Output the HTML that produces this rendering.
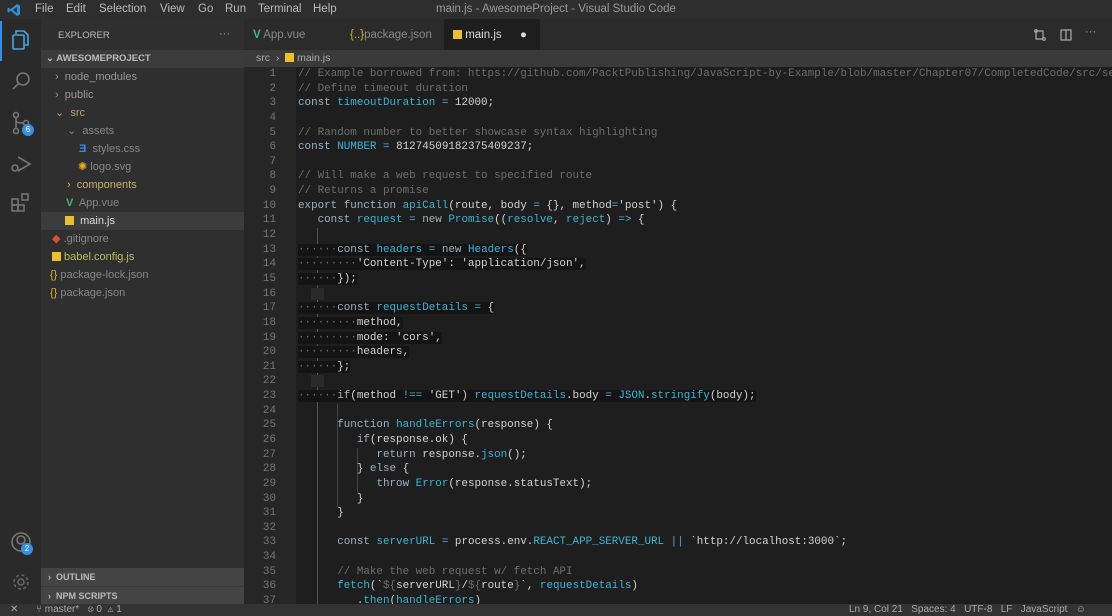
<!DOCTYPE html>
<html><head><meta charset="utf-8"><style>
*{margin:0;padding:0;box-sizing:border-box}
body{width:1112px;height:616px;overflow:hidden;background:#1e1e1e;font-family:"Liberation Sans",sans-serif;color:#ccc;position:relative}
.abs{position:absolute}
#title{left:0;top:0;width:1112px;height:19px;background:#2e2e2e;font-size:11.5px;color:#bbb}
#title span{position:absolute;top:3px}
#act{left:0;top:19px;width:41px;height:585px;background:#2a2a2a}
#side{left:41px;top:19px;width:203px;height:585px;background:#2f2f2f;font-size:11px}
.row{position:absolute;left:0;width:203px;height:18px;line-height:18px;white-space:nowrap}
#tabs{left:244px;top:19px;width:868px;height:31px;background:#2b2b2b}
.tab{position:absolute;top:0;height:31px;line-height:33px;font-size:11.5px;color:#8a8a8a}
#crumb{left:244px;top:50px;width:868px;height:17px;background:#3a3a3a;font-size:10.5px;color:#aaa}
#gut{left:244px;top:67px;width:52px;height:537px;background:#262626}
#code{left:296px;top:67px;width:816px;height:537px;background:#1e1e1e;overflow:hidden}
.ln{position:absolute;right:20px;font-family:"Liberation Mono",monospace;font-size:10.9px;color:#777;width:40px;text-align:right}
.l{position:absolute;left:2px;height:14.64px;white-space:pre;font-family:"Liberation Mono",monospace;font-size:10.9px;line-height:14.64px;color:#d4d4d4}
.c{color:#6e6e6e}.k{color:#9fb2c6}.v{color:#3fb4d6}.n{color:#d4d4d4}.s{color:#d8d8d8}.o{color:#5aa9d6}
.hl{background:#141414}
#status{left:0;top:604px;width:1112px;height:12px;background:#333;font-size:10px;color:#aaa}
.badge{position:absolute;width:12px;height:12px;border-radius:6px;background:#3a8ee6;color:#fff;font-size:8px;text-align:center;line-height:12px}
</style></head><body>
<div id="title" class="abs">
<svg class="abs" style="left:7px;top:3px" width="14" height="14" viewBox="0 0 14 14"><path d="M10 1 L13 2.5 V11.5 L10 13 L3.5 7.8 L1.3 9.5 L0.5 9 V5 L1.3 4.5 L3.5 6.2Z M10 4 L6 7 L10 10Z" fill="#2f8fd8" fill-rule="evenodd"/></svg>
<span style="left:35px">File</span><span style="left:66px">Edit</span><span style="left:99px">Selection</span><span style="left:160px">View</span><span style="left:198px">Go</span><span style="left:225px">Run</span><span style="left:258px">Terminal</span><span style="left:313px">Help</span>
<span style="left:436px;color:#9a9a9a">main.js - AwesomeProject - Visual Studio Code</span>
</div>
<div id="act" class="abs">
<div class="abs" style="left:0;top:2px;width:2px;height:40px;background:#3a8ee6"></div>
<svg class="abs" style="left:11px;top:10px" width="20" height="22" viewBox="0 0 20 22" fill="none" stroke="#4aa3e0" stroke-width="1.6"><path d="M5 5 V2 H13 L17 6 V16 H13"/><rect x="2" y="6" width="11" height="14" rx="1"/></svg>
<svg class="abs" style="left:11px;top:52px" width="20" height="20" viewBox="0 0 20 20" fill="none" stroke="#777" stroke-width="1.6"><circle cx="12" cy="8" r="6"/><path d="M8 12 L2 18"/></svg>
<svg class="abs" style="left:11px;top:92px" width="20" height="24" viewBox="0 0 20 24" fill="none" stroke="#777" stroke-width="1.6"><circle cx="5" cy="4" r="2.5"/><circle cx="5" cy="20" r="2.5"/><circle cx="15" cy="12" r="2.5"/><path d="M5 6.5 V17.5 M5 10 Q5 12 12.5 12"/></svg>
<div class="badge" style="left:22px;top:105px">6</div>
<svg class="abs" style="left:10px;top:135px" width="22" height="20" viewBox="0 0 22 20" fill="none" stroke="#777" stroke-width="1.6"><path d="M8 3 L20 10 L8 17"/><circle cx="5" cy="14" r="3"/></svg>
<svg class="abs" style="left:10px;top:173px" width="22" height="22" viewBox="0 0 22 22" fill="none" stroke="#777" stroke-width="1.5"><rect x="2" y="7" width="6" height="6"/><rect x="2" y="13" width="6" height="6"/><rect x="8" y="13" width="6" height="6"/><rect x="12" y="2" width="6" height="6"/></svg>
<svg class="abs" style="left:10px;top:512px" width="22" height="22" viewBox="0 0 22 22" fill="none" stroke="#777" stroke-width="1.6"><circle cx="11" cy="11" r="9"/><circle cx="11" cy="9" r="4"/></svg>
<div class="badge" style="left:21px;top:524px">2</div>
<svg class="abs" style="left:11px;top:553px" width="20" height="20" viewBox="0 0 20 20" fill="none" stroke="#666" stroke-width="1.6"><circle cx="10" cy="10" r="3"/><circle cx="10" cy="10" r="7" stroke-dasharray="3 2.5"/></svg>
</div>
<div id="side" class="abs">
<div class="row" style="top:8px;left:17px;font-size:9.5px;color:#bbb">EXPLORER</div>
<div class="row" style="top:6px;left:178px;width:20px;color:#999">···</div>
<div class="row" style="top:31px;background:#3b3b3b;font-size:9.5px;font-weight:bold;color:#bbb;padding-left:5px">⌄ AWESOMEPROJECT</div>
<div class="row" style="top:49px;padding-left:14px;color:#999">›&nbsp; node_modules</div>
<div class="row" style="top:67px;padding-left:14px;color:#999">›&nbsp; public</div>
<div class="row" style="top:85px;padding-left:14px;color:#c8a060">⌄&nbsp; <span style="color:#b8a070">src</span></div>
<div class="row" style="top:103px;padding-left:26px;color:#888">⌄&nbsp; assets</div>
<div class="row" style="top:121px;padding-left:38px;color:#888"><span style="color:#3a8ee6;font-weight:bold">Ǝ</span>&nbsp; styles.css</div>
<div class="row" style="top:139px;padding-left:37px;color:#888"><span style="color:#e8b020">✺</span>&nbsp;logo.svg</div>
<div class="row" style="top:157px;padding-left:26px;color:#c8b070">›&nbsp; components</div>
<div class="row" style="top:175px;padding-left:25px;color:#888"><span style="color:#40b883;font-weight:bold">V</span>&nbsp; App.vue</div>
<div class="row" style="top:193px;background:#3c3c3c;padding-left:24px;color:#ddd"><span style="display:inline-block;width:9px;height:9px;background:#e8c030;vertical-align:-1px"></span>&nbsp; main.js</div>
<div class="row" style="top:211px;padding-left:11px;color:#888"><span style="color:#e05030">◆</span>&nbsp;.gitignore</div>
<div class="row" style="top:229px;padding-left:11px;color:#b8c060"><span style="display:inline-block;width:9px;height:9px;background:#e8c030;vertical-align:-1px"></span>&nbsp;babel.config.js</div>
<div class="row" style="top:247px;padding-left:9px;color:#888"><span style="color:#d8b030">{}</span> package-lock.json</div>
<div class="row" style="top:265px;padding-left:9px;color:#888"><span style="color:#d8b030">{}</span> package.json</div>
<div class="row" style="top:549px;background:#444;font-size:9px;font-weight:bold;color:#bbb;padding-left:7px">›&nbsp; OUTLINE</div>
<div class="row" style="top:567px;background:#444;font-size:9px;font-weight:bold;color:#bbb;padding-left:7px;border-top:1px solid #3a3a3a">›&nbsp; NPM SCRIPTS</div>
</div>
<div id="tabs" class="abs">
<div class="tab" style="left:0;width:100px;padding-left:9px"><span style="color:#40b883;font-weight:bold">V</span> App.vue</div>
<div class="tab" style="left:100px;width:100px;padding-left:6px"><span style="color:#d8b030">{..}</span>package.json</div>
<div class="tab" style="left:200px;width:96px;background:#1e1e1e;color:#ddd;padding-left:9px"><span style="display:inline-block;width:9px;height:9px;background:#e8c030;vertical-align:-1px"></span> main.js <span style="position:absolute;left:76px;color:#ddd">●</span></div>
<svg class="abs" style="left:790px;top:10px" width="12" height="12" viewBox="0 0 12 12" fill="none" stroke="#aaa" stroke-width="1.2"><path d="M2 2 H9 V9 M2 2 V10 H9"/><circle cx="2" cy="2" r="1.3"/><circle cx="10" cy="10" r="1.3"/></svg>
<svg class="abs" style="left:816px;top:10px" width="12" height="12" viewBox="0 0 12 12" fill="none" stroke="#aaa" stroke-width="1.2"><rect x="1" y="1" width="10" height="10"/><path d="M6 1 V11"/></svg>
<div class="abs" style="left:841px;top:7px;color:#aaa;font-size:11px">···</div>
</div>
<div id="crumb" class="abs"><span style="position:absolute;left:12px;top:2px">src &nbsp;›&nbsp; <span style="display:inline-block;width:9px;height:9px;background:#e8c030;vertical-align:-1px"></span> main.js</span></div>
<div id="gut" class="abs"></div>
<div id="code" class="abs">
<div class="abs" style="left:21px;top:161px;width:1px;height:376px;background:#555"></div>
<div class="abs" style="left:41px;top:337px;width:1px;height:103px;background:#444"></div>
<div class="abs" style="left:61px;top:381px;width:1px;height:44px;background:#444"></div>
</div>
<div id="status" class="abs">
<span class="abs" style="left:10px;top:0">✕</span>
<span class="abs" style="left:36px;top:0">⑂ master*&nbsp;&nbsp; ⊗ 0 &nbsp;⚠ 1</span>
<span class="abs" style="left:849px;top:0">Ln 9, Col 21 &nbsp; Spaces: 4 &nbsp; UTF-8 &nbsp; LF &nbsp; JavaScript &nbsp; ☺</span>
</div>
<script>
const L=[
'<span class="c">// Example borrowed from: https://github.com/PacktPublishing/JavaScript-by-Example/blob/master/Chapter07/CompletedCode/src/se</span>',
'<span class="c">// Define timeout duration</span>',
'<span class="k">const</span> <span class="v">timeoutDuration</span> <span class="o">=</span> 12000;',
'',
'<span class="c">// Random number to better showcase syntax highlighting</span>',
'<span class="k">const</span> <span class="v">NUMBER</span> <span class="o">=</span> 81274509182375409237;',
'',
'<span class="c">// Will make a web request to specified route</span>',
'<span class="c">// Returns a promise</span>',
'<span class="k">export function</span> <span class="v">apiCall</span>(route, body <span class="o">=</span> {}, method<span class="o">=</span>\'post\') {',
'   <span class="k">const</span> <span class="v">request</span> <span class="o">=</span> <span class="k">new</span> <span class="v">Promise</span>((<span class="v">resolve</span>, <span class="v">reject</span>) <span class="o">=&gt;</span> {',
'',
'<span class="hl"><span class="c">······</span><span class="k">const</span> <span class="v">headers</span> <span class="o">=</span> <span class="k">new</span> <span class="v">Headers</span>({</span>',
'<span class="hl"><span class="c">·········</span>\'Content-Type\': \'application/json\',</span>',
'<span class="hl"><span class="c">······</span>});</span>',
'  <span style="background:#2a2a2a">  </span>',
'<span class="hl"><span class="c">······</span><span class="k">const</span> <span class="v">requestDetails</span> <span class="o">=</span> {</span>',
'<span class="hl"><span class="c">·········</span>method,</span>',
'<span class="hl"><span class="c">·········</span>mode: \'cors\',</span>',
'<span class="hl"><span class="c">·········</span>headers,</span>',
'<span class="hl"><span class="c">······</span>};</span>',
'  <span style="background:#2a2a2a">  </span>',
'<span class="hl"><span class="c">······</span><span class="k">if</span>(method <span class="o">!==</span> \'GET\') <span class="v">requestDetails</span>.body <span class="o">=</span> <span class="v">JSON</span>.<span class="v">stringify</span>(body);</span>',
'',
'      <span class="k">function</span> <span class="v">handleErrors</span>(response) {',
'         <span class="k">if</span>(response.ok) {',
'            <span class="k">return</span> response.<span class="v">json</span>();',
'         } <span class="k">else</span> {',
'            <span class="k">throw</span> <span class="v">Error</span>(response.statusText);',
'         }',
'      }',
'',
'      <span class="k">const</span> <span class="v">serverURL</span> <span class="o">=</span> process.env.<span class="v">REACT_APP_SERVER_URL</span> <span class="o">||</span> `http://localhost:3000`;',
'',
'      <span class="c">// Make the web request w/ fetch API</span>',
'      <span class="v">fetch</span>(`<span class="c">${</span>serverURL<span class="c">}</span>/<span class="c">${</span>route<span class="c">}</span>`, <span class="v">requestDetails</span>)',
'         .<span class="v">then</span>(<span class="v">handleErrors</span>)'
];
let h='',g='';
L.forEach((t,i)=>{const y=(i*14.64).toFixed(2);h+='<div class="l" style="top:'+y+'px">'+t+'</div>';g+='<div class="ln" style="top:'+y+'px;line-height:14.64px">'+(i+1)+'</div>';});
document.getElementById('code').insertAdjacentHTML('beforeend',h);
document.getElementById('gut').innerHTML=g;
</script>
</body></html>
